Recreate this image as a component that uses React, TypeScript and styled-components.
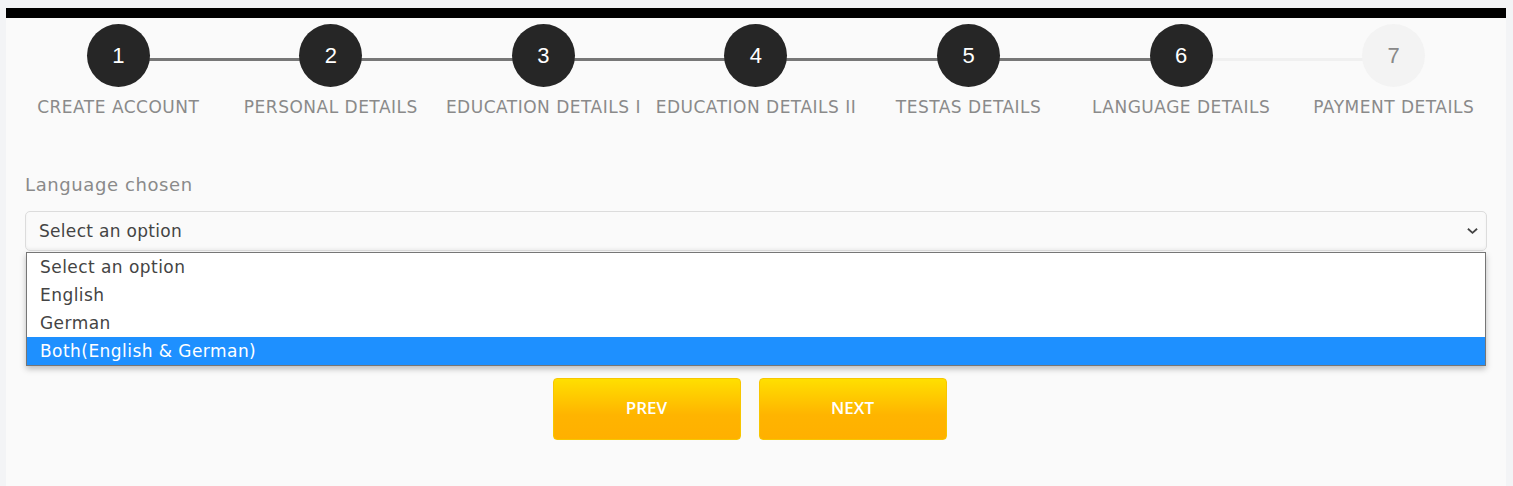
import React from "react";
import styled, { createGlobalStyle } from "styled-components";

const GlobalStyle = createGlobalStyle`
  html, body {
    margin: 0;
    padding: 0;
    background: #f3f4f6;
  }
  * {
    box-sizing: border-box;
  }
`;

const steps = [
  "CREATE ACCOUNT",
  "PERSONAL DETAILS",
  "EDUCATION DETAILS I",
  "EDUCATION DETAILS II",
  "TESTAS DETAILS",
  "LANGUAGE DETAILS",
  "PAYMENT DETAILS",
];

const options = ["Select an option", "English", "German", "Both(English & German)"];

const CURRENT = 6;

const App: React.FC = () => {
  return (
    <Page>
      <GlobalStyle />
      <Card>
        <Stepper>
          {steps.map((label, i) => (
            <Step key={label} $last={i === steps.length - 1} $lineDone={i + 2 <= CURRENT}>
              <Circle $done={i + 1 <= CURRENT}>{i + 1}</Circle>
              <StepLabel>{label}</StepLabel>
            </Step>
          ))}
        </Stepper>

        <Form>
          <FieldLabel>Language chosen</FieldLabel>
          <SelectWrap>
            <SelectBox>
              <span>Select an option</span>
              <Chevron viewBox="0 0 12 8" width="11" height="8">
                <path d="M1 1.5 L6 6 L11 1.5" fill="none" stroke="#444" strokeWidth="2" />
              </Chevron>
            </SelectBox>
            <OptionList>
              {options.map((opt, i) => (
                <Option key={opt} $selected={i === options.length - 1}>
                  {opt}
                </Option>
              ))}
            </OptionList>
          </SelectWrap>

          <Buttons>
            <NavButton>PREV</NavButton>
            <NavButton>NEXT</NavButton>
          </Buttons>
        </Form>
      </Card>
    </Page>
  );
};

export default App;

const Page = styled.div`
  padding: 8px 7px 0 6px;
  font-family: "DejaVu Sans", "Open Sans", sans-serif;
`;

const Card = styled.div`
  background: #fafafa;
  border-top: 10px solid #000;
  min-height: 478px;
`;

const Stepper = styled.div`
  display: grid;
  grid-template-columns: repeat(7, 1fr);
  padding: 6px 6px 0 6px;
`;

const Step = styled.div<{ $last: boolean; $lineDone: boolean }>`
  position: relative;
  display: flex;
  flex-direction: column;
  align-items: center;

  &::after {
    content: "";
    display: ${({ $last }) => ($last ? "none" : "block")};
    position: absolute;
    top: 34px;
    left: 50%;
    width: 100%;
    height: 3px;
    background: ${({ $lineDone }) => ($lineDone ? "#777" : "#f0f0f0")};
    z-index: 0;
  }
`;

const Circle = styled.div<{ $done: boolean }>`
  position: relative;
  z-index: 1;
  width: 63px;
  height: 63px;
  border-radius: 50%;
  display: flex;
  align-items: center;
  justify-content: center;
  background: ${({ $done }) => ($done ? "#262626" : "#f3f3f3")};
  color: ${({ $done }) => ($done ? "#fff" : "#888")};
  font-family: "Liberation Sans", Arial, sans-serif;
  font-size: 22px;
`;

const StepLabel = styled.div`
  margin-top: 8px;
  font-size: 17px;
  line-height: 24px;
  letter-spacing: 0.5px;
  color: #8a8a8a;
  white-space: nowrap;
`;

const Form = styled.div`
  padding: 53px 19px 0 19px;
`;

const FieldLabel = styled.div`
  font-size: 18px;
  line-height: 26px;
  letter-spacing: 0.6px;
  color: #8a8a8a;
  margin-bottom: 13px;
`;

const SelectWrap = styled.div`
  position: relative;
`;

const SelectBox = styled.div`
  height: 40px;
  border: 1px solid #dcdcdc;
  border-radius: 5px;
  background: #fafafa;
  box-shadow: inset 0 -2px 3px rgba(0, 0, 0, 0.04);
  display: flex;
  align-items: center;
  justify-content: space-between;
  padding: 0 8px 0 13px;
  font-size: 17px;
  letter-spacing: 0.3px;
  color: #444;
`;

const Chevron = styled.svg`
  display: block;
`;

const OptionList = styled.div`
  position: absolute;
  top: 41px;
  left: 1px;
  right: 1px;
  background: #fff;
  border: 1px solid #767676;
  box-shadow: 0 3px 6px rgba(0, 0, 0, 0.25);
  z-index: 5;
`;

const Option = styled.div<{ $selected: boolean }>`
  height: 28px;
  line-height: 28px;
  padding-left: 13px;
  font-size: 17px;
  letter-spacing: 0.45px;
  background: ${({ $selected }) => ($selected ? "#1e90ff" : "transparent")};
  color: ${({ $selected }) => ($selected ? "#fff" : "#444")};
`;

const Buttons = styled.div`
  display: flex;
  justify-content: center;
  gap: 18px;
  margin-top: 127px;
  padding-right: 13px;
`;

const NavButton = styled.button`
  width: 188px;
  height: 62px;
  padding: 0 0 3px 0;
  border: 1px solid #f7c600;
  border-radius: 4px;
  background: linear-gradient(to bottom, #ffdf00 0%, #ffb400 60%, #ffb000 100%);
  color: #fff;
  font-family: "Open Sans", "Liberation Sans", sans-serif;
  font-size: 17px;
  font-weight: 600;
`;
